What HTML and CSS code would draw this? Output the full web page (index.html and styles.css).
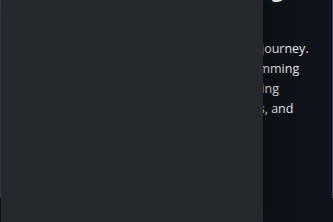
FILE: index.html
```html
<!DOCTYPE html>
<html lang="en">
<head>
    <meta charset="UTF-8">
    <meta name="viewport" content="width=device-width, initial-scale=1.0">
    <title>Getting Started</title>
    <link rel="stylesheet" href="styles.css">
</head>
<body>
    <div class="page">
        <main class="content">
            <h1>Welcome to Learn Coding</h1>
            <p class="intro">
                Welcome to this bootcamp, and your first journey.<br>
                Here you'll learn the basics of web programming<br>
                through small lessons and hands-on learning<br>
                with quizzes, small projects and real topics, and
            </p>
        </main>
        <aside class="drawer"></aside>
    </div>
</body>
</html>
```

FILE: styles.css
```css
html, body {
    margin: 0;
    height: 100%;
}
body {
    font-family: "Open Sans", "Noto Sans", sans-serif;
    background-color: #0e121a;
    color: #e8e8ea;
    overflow: hidden;
}
.page {
    height: 100%;
    border-left: 1px solid #3a3550;
    border-right: 1px solid #4a4562;
    box-sizing: border-box;
}
.content {
    padding: 0 16px;
}
.content h1 {
    margin: -24px 0 0;
    font-size: 21px;
    line-height: 26px;
    white-space: nowrap;
}
.intro {
    margin: 37px 0 0;
    font-size: 12.5px;
    font-weight: 500;
    line-height: 20px;
    white-space: nowrap;
}
.drawer {
    position: fixed;
    top: 0;
    left: 1px;
    width: 262px;
    height: 100%;
    background-color: #272730;
    box-shadow: 10px 0 20px rgba(0, 0, 0, 0.25);
}
```
